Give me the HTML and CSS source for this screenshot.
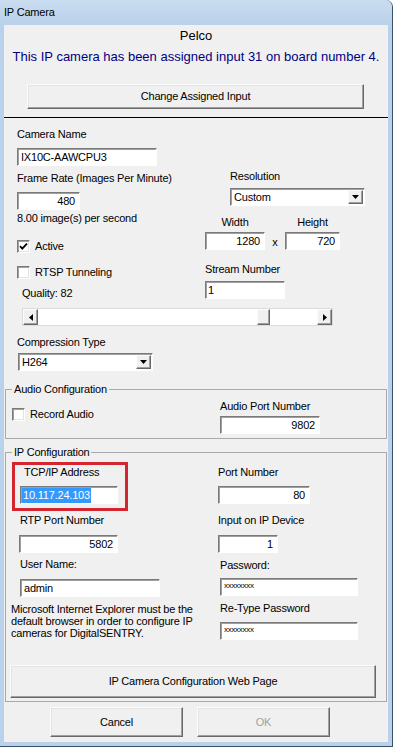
FILE: index.html
```html
<!DOCTYPE html>
<html>
<head>
<meta charset="utf-8">
<title>IP Camera</title>
<link rel="stylesheet" href="styles.css">
</head>
<body>
<div class="window">
  <div class="titlebar">IP Camera</div>
  <div class="client">
    <div class="header">
      <div class="vendor">Pelco</div>
      <div class="assign">This IP camera has been assigned input 31 on board number 4.</div>
      <div class="btn btn-change">Change Assigned Input</div>
    </div>

    <div class="settings">
      <div class="cols">
        <div class="col-left">
          <div class="label l-name">Camera Name</div>
          <div class="field f-name">IX10C-AAWCPU3</div>
          <div class="label l-frame">Frame Rate (Images Per Minute)</div>
          <div class="field num f-frame">480</div>
          <div class="label l-rate">8.00 image(s) per second</div>
          <div class="check-row r-active"><span class="checkbox"><svg width="9" height="9" viewBox="0 0 9 9"><polyline points="1,4.2 3.3,6.6 8,1.6" fill="none" stroke="#000" stroke-width="1.8"/></svg></span><span>Active</span></div>
          <div class="check-row r-rtsp"><span class="checkbox"></span><span>RTSP Tunneling</span></div>
          <div class="label l-quality">Quality: 82</div>
        </div>
        <div class="col-right">
          <div class="label l-res">Resolution</div>
          <div class="combo c-res"><span class="combo-text">Custom</span><span class="combo-btn"><svg width="7" height="4" viewBox="0 0 7 4"><polygon points="0,0 7,0 3.5,4" fill="#000"/></svg></span></div>
          <div class="dims-labels"><span class="dl-w">Width</span><span class="dl-h">Height</span></div>
          <div class="dims">
            <div class="field num f-w">1280</div>
            <span class="times">x</span>
            <div class="field num f-h">720</div>
          </div>
          <div class="label l-stream">Stream Number</div>
          <div class="field f-stream">1</div>
        </div>
      </div>
      <div class="hscroll">
        <span class="sb-btn"><svg width="4" height="7" viewBox="0 0 4 7"><polygon points="4,0 4,7 0,3.5" fill="#000"/></svg></span>
        <span class="sb-track"><span class="sb-thumb"></span></span>
        <span class="sb-btn"><svg width="4" height="7" viewBox="0 0 4 7"><polygon points="0,0 0,7 4,3.5" fill="#000"/></svg></span>
      </div>
      <div class="label l-comp">Compression Type</div>
      <div class="combo c-comp"><span class="combo-text">H264</span><span class="combo-btn"><svg width="7" height="4" viewBox="0 0 7 4"><polygon points="0,0 7,0 3.5,4" fill="#000"/></svg></span></div>
    </div>

    <fieldset class="group g-audio">
      <legend>Audio Configuration</legend>
      <div class="audio-row">
        <div class="audio-left">
          <div class="check-row r-audio"><span class="checkbox"></span><span>Record Audio</span></div>
        </div>
        <div class="audio-right">
          <div class="label l-aport">Audio Port Number</div>
          <div class="field num f-aport">9802</div>
        </div>
      </div>
    </fieldset>

    <fieldset class="group g-ip">
      <legend>IP Configuration</legend>
      <div class="ip-cols">
        <div class="ip-left">
          <div class="highlight-box">
            <div class="label l-tcp">TCP/IP Address</div>
            <div class="field f-ip"><span class="sel">10.117.24.103</span></div>
          </div>
          <div class="label l-rtp">RTP Port Number</div>
          <div class="field num f-rtp">5802</div>
          <div class="label l-user">User Name:</div>
          <div class="field f-user">admin</div>
          <div class="note">Microsoft Internet Explorer must be the<br>default browser in order to configure IP<br>cameras for DigitalSENTRY.</div>
        </div>
        <div class="ip-right">
          <div class="label l-port">Port Number</div>
          <div class="field num f-port">80</div>
          <div class="label l-input">Input on IP Device</div>
          <div class="field num f-input">1</div>
          <div class="label l-pass">Password:</div>
          <div class="field f-pass"><span class="mask">xxxxxxxx</span></div>
          <div class="label l-retype">Re-Type Password</div>
          <div class="field f-retype"><span class="mask">xxxxxxxx</span></div>
        </div>
      </div>
      <div class="btn btn-web">IP Camera Configuration Web Page</div>
    </fieldset>

    <div class="footer">
      <div class="btn btn-footer">Cancel</div>
      <div class="btn btn-footer btn-disabled">OK</div>
    </div>
  </div>
</div>
</body>
</html>
```
FILE: styles.css
```css
html, body {
  margin: 0;
  padding: 0;
  background: #ffffff;
}
body {
  font-family: "Liberation Sans", Arial, sans-serif;
  font-size: 11px;
  letter-spacing: -0.2px;
  line-height: 13px;
  color: #000;
}
.window {
  box-sizing: border-box;
  width: 393px;
  height: 747px;
  background: #b9d1ea;
  border-right: 1px solid #3a5064;
  border-bottom: 1px solid #3a5064;
  border-top-right-radius: 7px;
  padding: 0 4px 4px 4px;
}
.titlebar {
  height: 25px;
  margin: 0 -4px;
  padding-left: 4px;
  line-height: 25px;
  background: linear-gradient(#c9dcf0, #b9d1ea);
  border-top-right-radius: 7px;
  font-size: 11px;
}
.client {
  height: 717px;
  background: #f0f0f0;
  overflow: hidden;
}

/* header */
.header {
  padding-top: 3px;
  padding-bottom: 8px;
}
.vendor {
  text-align: center;
  font-size: 13px;
  line-height: 15px;
  letter-spacing: 0;
}
.assign {
  margin-top: 6px;
  text-align: center;
  font-size: 13px;
  line-height: 15px;
  letter-spacing: 0;
  color: #000080;
  white-space: nowrap;
}
.btn {
  box-sizing: border-box;
  display: flex;
  align-items: center;
  justify-content: center;
  background: #f0f0f0;
  border: 1px solid;
  border-color: #fcfcfc #696969 #696969 #fcfcfc;
  box-shadow: inset -1px -1px #a0a0a0, inset 1px 1px #e3e3e3;
}
.btn-change {
  margin-top: 20px;
  margin-left: 23px;
  width: 337px;
  height: 25px;
}

/* settings */
.settings {
  border-top: 1px solid #000;
}
.cols {
  display: flex;
}
.col-left {
  width: 188px;
  margin-left: 13px;
  display: flex;
  flex-direction: column;
  align-items: flex-start;
}
.col-right {
  display: flex;
  flex-direction: column;
  align-items: flex-start;
}
.label {
  white-space: nowrap;
  height: 13px;
}
.field {
  box-sizing: border-box;
  height: 18px;
  background: #fff;
  border: 1px solid;
  border-color: #7a7a7a #ffffff #ffffff #7a7a7a;
  box-shadow: inset 1px 1px #a0a0a0;
  padding: 0 3px 0 3px;
  line-height: 16px;
  white-space: nowrap;
  overflow: hidden;
}
.num {
  text-align: right;
  padding-right: 4px;
}
.l-name { margin-top: 10px; }
.f-name { margin-top: 7px; width: 140px; }
.l-frame { margin-top: 6px; }
.f-frame { margin-top: 7px; width: 63px; }
.l-rate { margin-top: 2px; }
.check-row {
  display: flex;
  align-items: center;
  height: 13px;
  white-space: nowrap;
}
.checkbox {
  box-sizing: border-box;
  width: 13px;
  height: 13px;
  margin-right: 5px;
  background: #fff;
  border: 1px solid;
  border-color: #7a7a7a #ffffff #ffffff #7a7a7a;
  box-shadow: inset 1px 1px #a0a0a0, inset -1px -1px #e3e3e3;
  display: flex;
  align-items: center;
  justify-content: center;
}
.r-active { margin-top: 15px; }
.r-rtsp { margin-top: 13px; }
.l-quality { margin-top: 8px; margin-left: 5px; }

.l-res { margin-top: 52px; margin-left: 25px; }
.combo {
  box-sizing: border-box;
  display: flex;
  height: 18px;
  background: #fff;
  border: 1px solid;
  border-color: #7a7a7a #ffffff #ffffff #7a7a7a;
  box-shadow: inset 1px 1px #a0a0a0;
  line-height: 16px;
}
.combo-text {
  flex: 1;
  padding-left: 3px;
}
.combo-btn {
  box-sizing: border-box;
  width: 15px;
  height: 14px;
  margin: 1px 1px 0 0;
  background: #f0f0f0;
  border: 1px solid;
  border-color: #fcfcfc #696969 #696969 #fcfcfc;
  box-shadow: inset -1px -1px #a0a0a0;
  display: flex;
  align-items: center;
  justify-content: center;
}
.c-res { margin-top: 5px; margin-left: 25px; width: 135px; }
.dims-labels {
  margin-top: 10px;
  display: flex;
  height: 13px;
  white-space: nowrap;
}
.dl-w { width: 60px; text-align: center; }
.dl-h { width: 55px; margin-left: 20px; text-align: center; }
.dims {
  margin-top: 3px;
  display: flex;
  align-items: flex-end;
}
.f-w { width: 60px; }
.f-h { width: 55px; }
.times {
  width: 20px;
  text-align: center;
  line-height: 13px;
  padding-bottom: 1px;
}
.l-stream { margin-top: 13px; }
.f-stream { margin-top: 5px; width: 80px; padding-left: 2px; }

.hscroll {
  box-sizing: border-box;
  display: flex;
  margin-top: 8px;
  margin-left: 18px;
  width: 311px;
  height: 18px;
  background: #fff;
  border: 1px solid #dcdcdc;
}
.sb-btn {
  box-sizing: border-box;
  width: 15px;
  height: 16px;
  background: #f0f0f0;
  border: 1px solid;
  border-color: #fcfcfc #696969 #696969 #fcfcfc;
  box-shadow: inset -1px -1px #a0a0a0;
  display: flex;
  align-items: center;
  justify-content: center;
}
.sb-track {
  flex: 1;
  display: flex;
}
.sb-thumb {
  box-sizing: border-box;
  margin-left: 219px;
  width: 13px;
  height: 16px;
  background: #f0f0f0;
  border: 1px solid;
  border-color: #fcfcfc #696969 #696969 #fcfcfc;
  box-shadow: inset -1px -1px #a0a0a0;
}
.l-comp { margin-top: 10px; margin-left: 13px; }
.c-comp { margin-top: 4px; margin-left: 14px; width: 135px; }

/* groups */
.group {
  box-sizing: border-box;
  min-width: 0;
  width: 382px;
  margin: 0 0 0 1px;
  padding: 0;
  border: 1px solid #a9a9a9;
  border-radius: 0;
}
.group legend {
  padding: 0 2px;
  margin-left: 6px;
  line-height: 13px;
  height: 13px;
}
.g-audio { margin-top: 12px; padding-bottom: 4px; }
.audio-row {
  display: flex;
}
.audio-left {
  width: 214px;
}
.r-audio { margin-top: 12px; margin-left: 6px; }
.audio-right {
  display: flex;
  flex-direction: column;
  align-items: flex-start;
}
.l-aport { margin-top: 4px; }
.f-aport { margin-top: 3px; width: 100px; }

.g-ip { margin-top: 7px; padding-bottom: 3px; }
.ip-cols {
  display: flex;
}
.ip-left {
  width: 212px;
  display: flex;
  flex-direction: column;
  align-items: flex-start;
}
.highlight-box {
  box-sizing: border-box;
  margin-top: 3px;
  margin-left: 6px;
  width: 116px;
  border: 3px solid #d5262f;
  padding: 1px 0 4px 5px;
}
.l-tcp { margin-left: 4px; }
.f-ip { margin-top: 7px; width: 98px; padding-left: 1px; }
.sel {
  display: inline-block;
  background: #3399ff;
  color: #fff;
  line-height: 15px;
  padding: 0 1px;
}
.l-rtp { margin-top: 3px; margin-left: 14px; }
.f-rtp { margin-top: 8px; margin-left: 13px; width: 99px; }
.l-user { margin-top: 5px; margin-left: 14px; }
.f-user { margin-top: 8px; margin-left: 14px; width: 140px; }
.note {
  margin-top: 6px;
  margin-left: 5px;
  line-height: 12px;
  white-space: nowrap;
}
.ip-right {
  display: flex;
  flex-direction: column;
  align-items: flex-start;
}
.l-port { margin-top: 7px; }
.f-port { margin-top: 7px; width: 92px; }
.l-input { margin-top: 10px; }
.f-input { margin-top: 8px; width: 60px; }
.l-pass { margin-top: 6px; margin-left: 2px; }
.f-pass { margin-top: 6px; margin-left: 2px; width: 138px; }
.l-retype { margin-top: 6px; margin-left: 2px; }
.f-retype { margin-top: 7px; margin-left: 2px; width: 138px; }
.mask {
  font-size: 8px;
  letter-spacing: -0.3px;
  vertical-align: top;
  line-height: 14px;
}
.btn-web {
  margin-top: 25px;
  margin-left: 4px;
  width: 366px;
  height: 33px;
}

/* footer */
.footer {
  display: flex;
  gap: 14px;
  margin-top: 5px;
  margin-left: 46px;
}
.btn-footer {
  width: 133px;
  height: 30px;
}
.btn-disabled {
  color: #a0a0a0;
}
```
